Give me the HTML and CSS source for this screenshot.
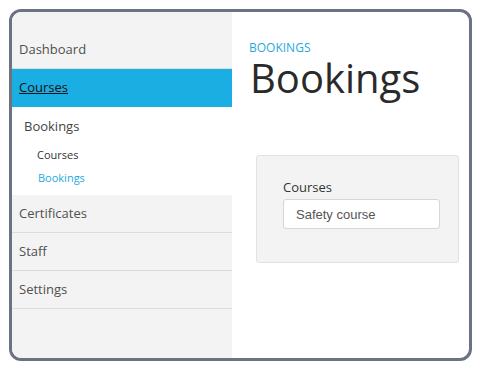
FILE: index.html
```html
<!DOCTYPE html>
<html lang="en">
<head>
    <meta charset="UTF-8">
    <meta name="viewport" content="width=device-width, initial-scale=1.0">
    <title>Bookings</title>
    <link rel="stylesheet" href="styles.css">
</head>
<body>
    <div class="frame">
        <div class="side">
            <a class="item">Dashboard</a>
            <a class="item active">Courses</a>
            <div class="sub">
                <div class="sub-title">Bookings</div>
                <a class="sub-link">Courses</a>
                <a class="sub-link current">Bookings</a>
            </div>
            <a class="item">Certificates</a>
            <a class="item">Staff</a>
            <a class="item">Settings</a>
        </div>
        <div class="main">
            <div class="crumb">BOOKINGS</div>
            <h1>Bookings</h1>
            <div class="card">
                <label class="label">Courses</label>
                <input type="text" class="text" value="Safety course">
            </div>
        </div>
    </div>
</body>
</html>
```

FILE: styles.css
```css
body {
    margin: 0;
    font-family: "Open Sans", "Liberation Sans", sans-serif;
}
.frame {
    width: 463px;
    height: 352px;
    margin: 9px 0 0 9px;
    box-sizing: border-box;
    border: 3px solid #6b7280;
    border-radius: 12px;
    display: flex;
    overflow: hidden;
    background: #fff;
}
.side {
    width: 220px;
    background: #f3f3f3;
    padding-top: 19px;
}
.item {
    display: block;
    height: 37px;
    line-height: 37px;
    padding-left: 7px;
    font-size: 13px;
    color: #505050;
    border-bottom: 1px solid #dcdcdc;
}
.active {
    background: #1aaee3;
    color: #111;
    text-decoration: underline;
    border-bottom-color: #1aaee3;
}
.sub {
    background: #fff;
    padding: 8px 0 10px 12px;
    height: 70px;
}
.sub-title {
    font-size: 13px;
    color: #444;
    line-height: 22px;
    margin-bottom: 6px;
}
.sub-link {
    display: block;
    font-size: 11px;
    color: #333;
    line-height: 23px;
    padding-left: 13px;
}
.current {
    color: #29a8e0;
    padding-left: 14px;
}
.main {
    flex: 1;
    padding: 29px 0 0 14px;
}
.crumb {
    font-size: 12px;
    font-weight: 500;
    color: #29a8e0;
    line-height: 14px;
    padding-left: 3px;
}
h1 {
    margin: 0;
    font-size: 40px;
    font-weight: normal;
    color: #2a2a2a;
    line-height: 46px;
    padding-left: 4px;
}
.card {
    width: 175px;
    height: 84px;
    margin: 54px 0 0 10px;
    background: #f3f3f3;
    border: 1px solid #e2e2e2;
    border-radius: 3px;
    padding: 22px 0 0 26px;
}
.label {
    display: block;
    font-size: 13px;
    color: #333;
    line-height: 18px;
}
.text {
    display: block;
    width: 157px;
    height: 30px;
    margin-top: 3px;
    box-sizing: border-box;
    border: 1px solid #d6d6d6;
    border-radius: 3px;
    padding: 0 12px;
    font-family: "Liberation Sans", Arial, sans-serif;
    font-size: 13px;
    color: #555;
    background: #fff;
}
```
